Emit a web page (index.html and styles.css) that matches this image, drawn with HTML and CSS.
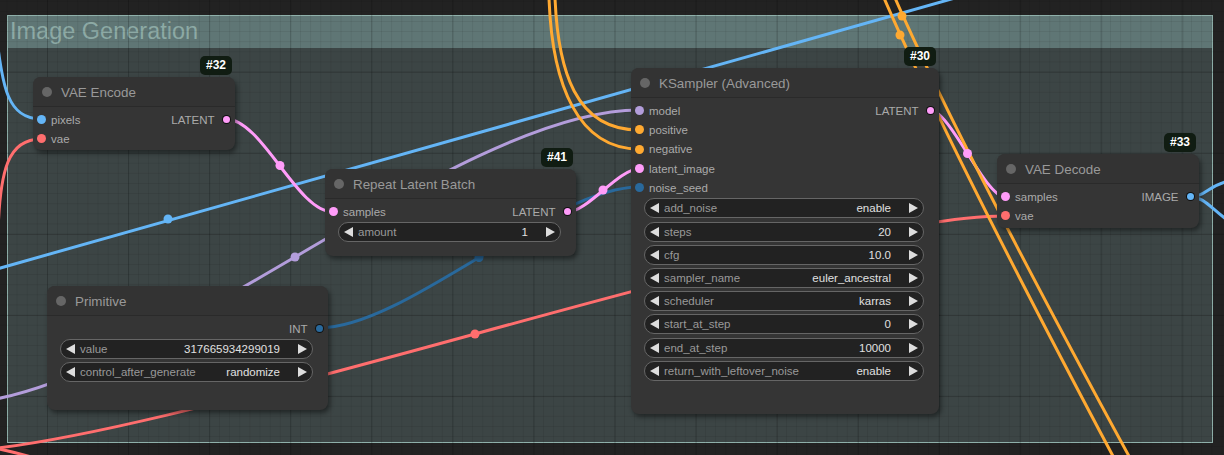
FILE: index.html
```html
<!DOCTYPE html>
<html>
<head>
<meta charset="utf-8">
<title>Image Generation</title>
<link rel="stylesheet" href="styles.css">
</head>
<body>
<div class="canvas">
  <div class="group"><div class="group-title">Image Generation</div></div>
  <div class="grid"></div>

  <svg class="links" width="1224" height="455" viewBox="0 0 1224 455">
    <g fill="none" stroke-width="3" stroke-linecap="round">
      <path stroke="#64b5f6" d="M -5 269.5 L 955 -2"/>
      <path stroke="#64b5f6" d="M -4 30 C 2 88, 8 119, 41 119"/>
      <path stroke="#64b5f6" d="M 1190 197 C 1205 197, 1210 184, 1230 181"/>
      <path stroke="#64b5f6" d="M 1190 197 C 1205 197, 1210 208, 1230 222"/>
      <path stroke="#ff6e6e" d="M -2 232 C 0 170, 8 139, 41 139"/>
      <path stroke="#ff6e6e" d="M -55 452 C 145 452, 805 216, 1005 216"/>
      <path stroke="#ff6e6e" d="M -10 447 Q 10 451 35 458"/>
      <path stroke="#b39ddb" d="M -49 404 C 138 404, 452 110, 639 110"/>
      <path stroke="#29699c" d="M 319 328 C 406 328, 552 187, 639 187"/>
      <path stroke="#ff9cf9" d="M 226 119 C 262 119, 297 212, 333 212"/>
      <path stroke="#ff9cf9" d="M 567 212 C 588 212, 618 169, 639 169"/>
      <path stroke="#ff9cf9" d="M 930 110 C 950 110, 985 197, 1005 197"/>
      <path stroke="#ffa931" d="M 555 -2 C 558 70, 575 130, 639 130"/>
      <path stroke="#ffa931" d="M 549 -2 C 552 85, 578 149, 639 149"/>
      <path stroke="#ffa931" d="M 884 -2 Q 950 150 1114 458"/>
      <path stroke="#ffa931" d="M 895 -2 Q 962 150 1130 458"/>
    </g>
    <g>
      <circle cx="168" cy="219" r="4.5" fill="#64b5f6"/>
      <circle cx="295" cy="257" r="4.5" fill="#b39ddb"/>
      <circle cx="280" cy="165.5" r="4.5" fill="#ff9cf9"/>
      <circle cx="603" cy="190" r="4.5" fill="#ff9cf9"/>
      <circle cx="967.5" cy="153.5" r="4.5" fill="#ff9cf9"/>
      <circle cx="479" cy="257.5" r="4.5" fill="#29699c"/>
      <circle cx="475" cy="334" r="4.5" fill="#ff6e6e"/>
      <circle cx="902" cy="16" r="4.5" fill="#ffa931"/>
      <circle cx="900" cy="35" r="4.5" fill="#ffa931"/>
    </g>
  </svg>

  <div class="node n-vae-encode">
    <div class="badge">#32</div>
    <div class="node-title"><span class="tdot"></span>VAE Encode</div>
    <div class="node-body">
      <div class="slots">
        <div class="ins">
          <div class="slot"><i class="dot c-image"></i>pixels</div>
          <div class="slot"><i class="dot c-vae"></i>vae</div>
        </div>
        <div class="outs">
          <div class="slot">LATENT<i class="odot c-latent"></i></div>
        </div>
      </div>
    </div>
  </div>

  <div class="node n-repeat">
    <div class="badge">#41</div>
    <div class="node-title"><span class="tdot"></span>Repeat Latent Batch</div>
    <div class="node-body">
      <div class="slots">
        <div class="ins">
          <div class="slot"><i class="dot c-latent"></i>samples</div>
        </div>
        <div class="outs">
          <div class="slot">LATENT<i class="odot c-latent"></i></div>
        </div>
      </div>
      <div class="widgets">
        <div class="widget"><i class="arr-l"></i><span class="wlabel">amount</span><span class="wvalue">1</span><i class="arr-r"></i></div>
      </div>
    </div>
  </div>

  <div class="node n-primitive">
    <div class="node-title"><span class="tdot"></span>Primitive</div>
    <div class="node-body">
      <div class="slots">
        <div class="ins"></div>
        <div class="outs">
          <div class="slot">INT<i class="odot c-int"></i></div>
        </div>
      </div>
      <div class="widgets">
        <div class="widget"><i class="arr-l"></i><span class="wlabel">value</span><span class="wvalue">317665934299019</span><i class="arr-r"></i></div>
        <div class="widget"><i class="arr-l"></i><span class="wlabel">control_after_generate</span><span class="wvalue">randomize</span><i class="arr-r"></i></div>
      </div>
    </div>
  </div>

  <div class="node n-ksampler">
    <div class="badge">#30</div>
    <div class="node-title"><span class="tdot"></span>KSampler (Advanced)</div>
    <div class="node-body">
      <div class="slots">
        <div class="ins">
          <div class="slot"><i class="dot c-model"></i>model</div>
          <div class="slot"><i class="dot c-cond"></i>positive</div>
          <div class="slot"><i class="dot c-cond"></i>negative</div>
          <div class="slot"><i class="dot c-latent"></i>latent_image</div>
          <div class="slot"><i class="dot c-int"></i>noise_seed</div>
        </div>
        <div class="outs">
          <div class="slot">LATENT<i class="odot c-latent"></i></div>
        </div>
      </div>
      <div class="widgets">
        <div class="widget"><i class="arr-l"></i><span class="wlabel">add_noise</span><span class="wvalue">enable</span><i class="arr-r"></i></div>
        <div class="widget"><i class="arr-l"></i><span class="wlabel">steps</span><span class="wvalue">20</span><i class="arr-r"></i></div>
        <div class="widget"><i class="arr-l"></i><span class="wlabel">cfg</span><span class="wvalue">10.0</span><i class="arr-r"></i></div>
        <div class="widget"><i class="arr-l"></i><span class="wlabel">sampler_name</span><span class="wvalue">euler_ancestral</span><i class="arr-r"></i></div>
        <div class="widget"><i class="arr-l"></i><span class="wlabel">scheduler</span><span class="wvalue">karras</span><i class="arr-r"></i></div>
        <div class="widget"><i class="arr-l"></i><span class="wlabel">start_at_step</span><span class="wvalue">0</span><i class="arr-r"></i></div>
        <div class="widget"><i class="arr-l"></i><span class="wlabel">end_at_step</span><span class="wvalue">10000</span><i class="arr-r"></i></div>
        <div class="widget"><i class="arr-l"></i><span class="wlabel">return_with_leftover_noise</span><span class="wvalue">enable</span><i class="arr-r"></i></div>
      </div>
    </div>
  </div>

  <div class="node n-vae-decode">
    <div class="badge">#33</div>
    <div class="node-title"><span class="tdot"></span>VAE Decode</div>
    <div class="node-body">
      <div class="slots">
        <div class="ins">
          <div class="slot"><i class="dot c-latent"></i>samples</div>
          <div class="slot"><i class="dot c-vae"></i>vae</div>
        </div>
        <div class="outs">
          <div class="slot">IMAGE<i class="odot c-image"></i></div>
        </div>
      </div>
    </div>
  </div>
</div>
</body>
</html>
```

FILE: styles.css
```css
html, body {
  margin: 0;
  padding: 0;
  background: #222;
}

body {
  font-family: "Liberation Sans", Arial, sans-serif;
}

.canvas {
  position: relative;
  width: 1224px;
  height: 455px;
  overflow: hidden;
  background: #222;
}

/* group */
.group {
  position: absolute;
  left: 7px;
  top: 15px;
  width: 1206px;
  height: 428px;
  box-sizing: border-box;
  border: 1px solid #8fb0aa;
  background: #3c4545;
}

.group-title {
  height: 32px;
  line-height: 30.5px;
  padding-left: 2px;
  background: #5f7675;
  color: #8daaa5;
  font-size: 23.5px;
  white-space: nowrap;
}

/* grid */
.grid {
  position: absolute;
  left: 0;
  top: 0;
  width: 1224px;
  height: 455px;
  pointer-events: none;
  background-image:
    linear-gradient(to right, rgba(0, 0, 0, 0.17) 1px, transparent 1px),
    linear-gradient(to bottom, rgba(0, 0, 0, 0.17) 1px, transparent 1px),
    linear-gradient(to right, rgba(0, 0, 0, 0.07) 1px, transparent 1px),
    linear-gradient(to bottom, rgba(0, 0, 0, 0.07) 1px, transparent 1px);
  background-size: 81.1px 81.1px, 81.1px 81.1px, 10.1375px 10.1375px, 10.1375px 10.1375px;
  background-position: 47px 71.7px, 47px 71.7px, 6.45px 0.74px, 6.45px 0.74px;
}

.links {
  position: absolute;
  left: 0;
  top: 0;
}

/* nodes */
.node {
  position: absolute;
  background: #353535;
  border-radius: 8px;
  box-shadow: 2px 3px 5px rgba(0, 0, 0, 0.45);
}

.n-vae-encode { left: 33px; top: 77px; width: 202px; height: 73px; }
.n-repeat { left: 325px; top: 169px; width: 251px; height: 87px; }
.n-primitive { left: 47px; top: 286px; width: 281px; height: 124px; }
.n-ksampler { left: 631px; top: 68px; width: 308px; height: 346px; }
.n-vae-decode { left: 997px; top: 154px; width: 202px; height: 74px; }

.badge {
  position: absolute;
  right: 3px;
  top: -21px;
  width: 32px;
  height: 19px;
  border-radius: 5px;
  background: #101c12;
  color: #fff;
  font-size: 12px;
  font-weight: bold;
  line-height: 19px;
  text-align: center;
}

.node-title {
  box-sizing: border-box;
  height: 30px;
  padding: 1px 0 0 9px;
  border-bottom: 1px solid #2a2a2a;
  border-radius: 8px 8px 0 0;
  background: #333;
  display: flex;
  align-items: center;
  color: #999;
  font-size: 13.4px;
  white-space: nowrap;
}

.tdot {
  width: 10px;
  height: 10px;
  border-radius: 50%;
  background: #666;
  margin-right: 9px;
  flex: none;
}

.node-body {
  padding-top: 3px;
}

.slots {
  display: flex;
  justify-content: space-between;
}

.ins {
  padding-left: 3.5px;
}

.outs {
  padding-right: 5.5px;
}

.slot {
  height: 19.3px;
  display: flex;
  align-items: center;
  font-size: 11.5px;
  color: #aaa;
  white-space: nowrap;
}

.outs .slot {
  justify-content: flex-end;
}

.dot {
  width: 9px;
  height: 9px;
  border-radius: 50%;
  margin-right: 5.5px;
  flex: none;
}

.odot {
  width: 7px;
  height: 7px;
  border-radius: 50%;
  margin-left: 8px;
  box-shadow: 0 0 0 1px #111;
  flex: none;
}

.c-image { background: #64b5f6; }
.c-vae { background: #ff6e6e; }
.c-latent { background: #ff9cf9; }
.c-model { background: #b39ddb; }
.c-cond { background: #ffa931; }
.c-int { background: #29699c; }

/* widgets */
.widgets {
  display: flex;
  flex-direction: column;
  gap: 3.2px;
  margin: 1px 15px 0 13px;
}

.widget {
  box-sizing: border-box;
  height: 20px;
  border: 1px solid #666;
  border-radius: 10px;
  background: #222;
  display: flex;
  align-items: center;
  padding: 0 5px;
  font-size: 11.5px;
  white-space: nowrap;
}

.arr-l {
  width: 0;
  height: 0;
  border-top: 5px solid transparent;
  border-bottom: 5px solid transparent;
  border-right: 9px solid #ddd;
  flex: none;
}

.arr-r {
  width: 0;
  height: 0;
  border-top: 5px solid transparent;
  border-bottom: 5px solid transparent;
  border-left: 9px solid #ddd;
  flex: none;
}

.wlabel {
  flex: 1;
  margin-left: 5px;
  color: #999;
}

.wvalue {
  margin-right: 18px;
  color: #e0e0e0;
}
```
